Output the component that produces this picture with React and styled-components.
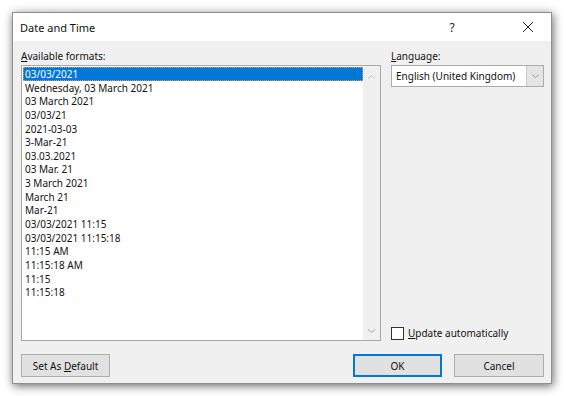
import styled, { createGlobalStyle } from "styled-components";

const Global = createGlobalStyle`
	html, body {
		margin: 0;
		padding: 0;
		background: #ffffff;
	}
	body {
		font-family: "Noto Sans", "Liberation Sans", sans-serif;
		font-size: 10px;
		color: #000;
	}
`;

const Page = styled.div`
	width: 566px;
	height: 396px;
	padding: 12px 0 0 12px;
	box-sizing: border-box;
`;

const Window = styled.div`
	width: 540px;
	height: 372px;
	box-sizing: border-box;
	border: 1px solid #8f8f8f;
	background: #f0f0f0;
	box-shadow: 1px 2px 9px rgba(0, 0, 0, 0.6);
	display: flex;
	flex-direction: column;
`;

const TitleBar = styled.div`
	height: 28px;
	background: #ffffff;
	display: flex;
	align-items: center;
	padding-left: 7px;
	> h1 {
		flex: 1;
		margin: 0;
		font-size: 11px;
		font-weight: 400;
		color: #111;
	}
`;

const TitleButton = styled.div`
	width: 38px;
	height: 28px;
	display: flex;
	align-items: center;
	justify-content: center;
	font-size: 12px;
	color: #222;
	margin-right: ${(p) => p.$mr || 0}px;
`;

const Body = styled.div`
	flex: 1;
	display: flex;
	flex-direction: column;
	padding: 8px 7px 6px 8px;
`;

const Columns = styled.div`
	flex: 1;
	display: grid;
	grid-template-columns: 360px 153px;
	column-gap: 10px;
`;

const Column = styled.div`
	display: flex;
	flex-direction: column;
`;

const Label = styled.div`
	height: 16px;
	line-height: 14px;
	color: #111;
	> u {
		text-decoration: underline;
		text-underline-offset: 1px;
	}
`;

const ListBox = styled.div`
	height: 276px;
	box-sizing: border-box;
	border: 1px solid #a8a8a8;
	background: #ffffff;
	display: flex;
	padding: 1px 0 1px 1px;
`;

const Items = styled.div`
	flex: 1;
	display: flex;
	flex-direction: column;
`;

const Item = styled.div`
	height: 13.65px;
	line-height: 14.5px;
	padding-left: 2px;
	white-space: nowrap;
	box-sizing: border-box;
	background: ${(p) => (p.$selected ? "#0078d7" : "transparent")};
	color: ${(p) => (p.$selected ? "#ffffff" : "#111")};
	outline: ${(p) => (p.$selected ? "1px dotted #c9a56a" : "none")};
	outline-offset: -1px;
`;

const ScrollTrack = styled.div`
	width: 17px;
	margin: -1px 0;
	background: #f0f0f0;
	display: flex;
	flex-direction: column;
	justify-content: space-between;
	align-items: center;
	padding: 8px 0 6px;
`;

const Select = styled.div`
	margin-top: 0;
	height: 22px;
	box-sizing: border-box;
	border: 1px solid #acacac;
	background: #ffffff;
	display: flex;
	> span {
		flex: 1;
		line-height: 21px;
		padding-left: 4px;
		color: #111;
	}
`;

const SelectArrow = styled.div`
	width: 16px;
	background: #e5e5e5;
	border-left: 1px solid #c8c8c8;
	display: flex;
	align-items: center;
	justify-content: center;
`;

const CheckRow = styled.label`
	margin-top: auto;
	margin-bottom: 2px;
	display: flex;
	align-items: center;
	gap: 4px;
	color: #111;
`;

const CheckBox = styled.span`
	width: 13px;
	height: 13px;
	box-sizing: border-box;
	border: 1px solid #333;
	background: #fff;
`;

const Buttons = styled.div`
	display: flex;
	margin-top: 12px;
	height: 23px;
`;

const Button = styled.div`
	width: ${(p) => p.$w}px;
	height: 23px;
	box-sizing: border-box;
	border: 1px solid ${(p) => (p.$primary ? "#0078d7" : "#adadad")};
	box-shadow: ${(p) => (p.$primary ? "inset 0 0 0 1px #0078d7" : "none")};
	background: #e1e1e1;
	color: #111;
	display: flex;
	align-items: center;
	justify-content: center;
	margin-left: ${(p) => p.$ml || 0}px;
	> span > u {
		text-underline-offset: 1px;
	}
`;

const Caret = ({ down }) => (
	<svg width="9" height="6" viewBox="0 0 9 6">
		<path
			d={down ? "M1 1.5 L4.5 4.5 L8 1.5" : "M1 4.5 L4.5 1.5 L8 4.5"}
			fill="none"
			stroke={down ? "#a0a0a0" : "#c0c0c0"}
			strokeWidth="1"
		/>
	</svg>
);

const formats = [
	"03/03/2021",
	"Wednesday, 03 March 2021",
	"03 March 2021",
	"03/03/21",
	"2021-03-03",
	"3-Mar-21",
	"03.03.2021",
	"03 Mar. 21",
	"3 March 2021",
	"March 21",
	"Mar-21",
	"03/03/2021 11:15",
	"03/03/2021 11:15:18",
	"11:15 AM",
	"11:15:18 AM",
	"11:15",
	"11:15:18",
];

const App = () => {
	return (
		<Page>
			<Global />
			<Window>
				<TitleBar>
					<h1>Date and Time</h1>
					<TitleButton $mr={38}>?</TitleButton>
					<TitleButton $mr={4}>
						<svg width="12" height="12" viewBox="0 0 12 12">
							<path d="M1 1 L11 11 M11 1 L1 11" stroke="#222" strokeWidth="1" />
						</svg>
					</TitleButton>
				</TitleBar>
				<Body>
					<Columns>
						<Column>
							<Label>
								<u>A</u>vailable formats:
							</Label>
							<ListBox>
								<Items>
									{formats.map((f, i) => (
										<Item key={f} $selected={i === 0}>
											{f}
										</Item>
									))}
								</Items>
								<ScrollTrack>
									<Caret />
									<Caret down />
								</ScrollTrack>
							</ListBox>
						</Column>
						<Column>
							<Label>
								<u>L</u>anguage:
							</Label>
							<Select>
								<span>English (United Kingdom)</span>
								<SelectArrow>
									<Caret down />
								</SelectArrow>
							</Select>
							<CheckRow>
								<CheckBox />
								<span>
									<u>U</u>pdate automatically
								</span>
							</CheckRow>
						</Column>
					</Columns>
					<Buttons>
						<Button $w={89}>
							<span>
								Set As <u>D</u>efault
							</span>
						</Button>
						<Button $w={89} $primary $ml={243}>
							OK
						</Button>
						<Button $w={90} $ml={12}>
							Cancel
						</Button>
					</Buttons>
				</Body>
			</Window>
		</Page>
	);
};

export default App;
